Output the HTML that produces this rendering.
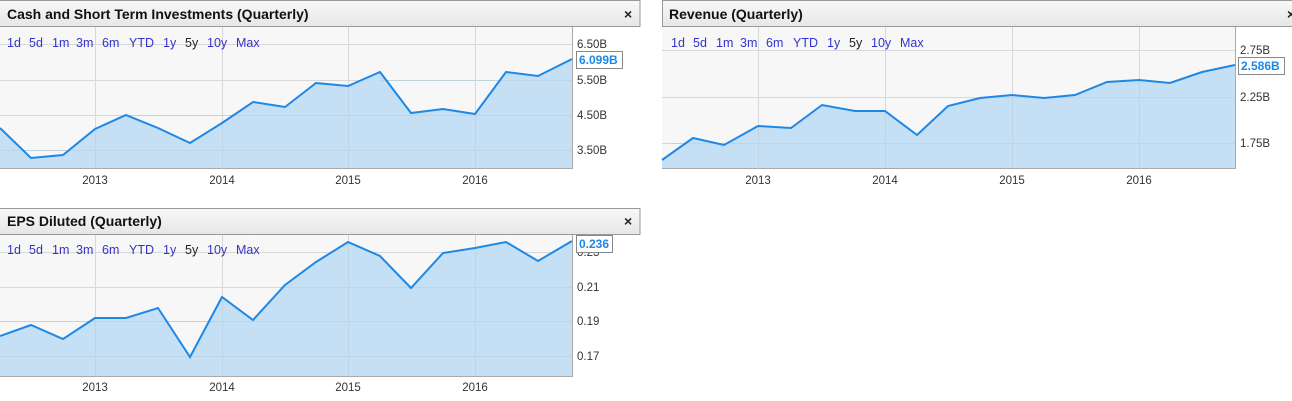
<!DOCTYPE html>
<html><head><meta charset="utf-8"><style>
html,body{margin:0;padding:0;background:#fff;width:1292px;height:401px;overflow:hidden}
svg{display:block;font-family:"Liberation Sans",Arial,sans-serif}
.t{font-weight:bold;font-size:14px;fill:#111}
.x{font-weight:bold;font-size:14px;fill:#222}
.r{font-size:12.5px;fill:#3333cc}
.ax{font-size:11.5px;fill:#333}
.grid{stroke:#d8d8d8;stroke-width:1}
.ln{fill:none;stroke:#1e88e5;stroke-width:2}
.ar{fill:#c5dff4}
.lb{font-size:12px;font-weight:bold;fill:#1e88e5}
</style></head><body>
<svg width="1292" height="401" viewBox="0 0 1292 401">
<defs><linearGradient id="hg" x1="0" y1="0" x2="0" y2="1"><stop offset="0" stop-color="#f9f9f9"/><stop offset="1" stop-color="#e6e6e6"/></linearGradient>
<g id="rng"><text class="r" y="0"><tspan x="7">1d</tspan><tspan x="29">5d</tspan><tspan x="52">1m</tspan><tspan x="76">3m</tspan><tspan x="102">6m</tspan><tspan x="129">YTD</tspan><tspan x="163">1y</tspan><tspan x="185" fill="#222">5y</tspan><tspan x="207">10y</tspan><tspan x="236">Max</tspan></text></g></defs>

<!-- Panel 1 -->
<rect x="-1" y="0.5" width="641" height="26" fill="url(#hg)" stroke="#999"/>
<text class="t" x="7" y="19">Cash and Short Term Investments (Quarterly)</text>
<text class="x" x="624" y="19">×</text>
<rect x="0" y="27" width="572" height="141" fill="#f7f7f7"/>
<g class="grid"><line x1="95.5" y1="27" x2="95.5" y2="168"/><line x1="222.5" y1="27" x2="222.5" y2="168"/><line x1="348.5" y1="27" x2="348.5" y2="168"/><line x1="475.5" y1="27" x2="475.5" y2="168"/>
<line x1="0" y1="44.5" x2="572" y2="44.5"/><line x1="0" y1="80.5" x2="572" y2="80.5"/><line x1="0" y1="115.5" x2="572" y2="115.5"/><line x1="0" y1="150.5" x2="572" y2="150.5"/></g>
<polygon class="ar" points="0,128 31,158 63,155 95,129 126,115 158,128 190,143 222,123 253,102 285,107 316,83 348,86 380,72 411,113 443,109 475,114 506,72 538,76 572,59 572,168 0,168"/>
<g stroke="#b8cfe0" opacity=".6"><line x1="95.5" y1="130" x2="95.5" y2="168"/><line x1="222.5" y1="123" x2="222.5" y2="168"/><line x1="348.5" y1="86" x2="348.5" y2="168"/><line x1="475.5" y1="114" x2="475.5" y2="168"/><line x1="0" y1="150.5" x2="572" y2="150.5"/><line x1="126" y1="115.5" x2="572" y2="115.5"/><line x1="380" y1="80.5" x2="572" y2="80.5"/></g>
<polyline class="ln" points="0,128 31,158 63,155 95,129 126,115 158,128 190,143 222,123 253,102 285,107 316,83 348,86 380,72 411,113 443,109 475,114 506,72 538,76 572,59"/>
<line x1="572.5" y1="27" x2="572.5" y2="168" stroke="#aaa"/><line x1="0" y1="168.5" x2="573" y2="168.5" stroke="#aaa"/>
<use href="#rng" y="47"/>
<text class="ax" x="577" y="48">6.50B</text><text class="ax" x="577" y="84">5.50B</text><text class="ax" x="577" y="119">4.50B</text><text class="ax" x="577" y="154">3.50B</text>
<rect x="576.5" y="51.5" width="46" height="17" fill="#fff" stroke="#888"/><text class="lb" x="579" y="64">6.099B</text>
<g class="ax" text-anchor="middle"><text x="95" y="184">2013</text><text x="222" y="184">2014</text><text x="348" y="184">2015</text><text x="475" y="184">2016</text></g>

<!-- Panel 2 -->
<rect x="662.5" y="0.5" width="640" height="26" fill="url(#hg)" stroke="#999"/>
<text class="t" x="669" y="19">Revenue (Quarterly)</text>
<text class="x" x="1287" y="19">×</text>
<rect x="662" y="27" width="573" height="141" fill="#f7f7f7"/>
<g class="grid"><line x1="758.5" y1="27" x2="758.5" y2="168"/><line x1="885.5" y1="27" x2="885.5" y2="168"/><line x1="1012.5" y1="27" x2="1012.5" y2="168"/><line x1="1139.5" y1="27" x2="1139.5" y2="168"/>
<line x1="662" y1="50.5" x2="1235" y2="50.5"/><line x1="662" y1="97.5" x2="1235" y2="97.5"/><line x1="662" y1="143.5" x2="1235" y2="143.5"/></g>
<polygon class="ar" points="662,160 693,138 724,145 758,126 791,128 822,105 855,111 885,111 917,135 948,106 980,98 1012,95 1044,98 1075,95 1107,82 1139,80 1170,83 1202,72 1235,65 1235,168 662,168"/>
<g stroke="#b8cfe0" opacity=".6"><line x1="758.5" y1="127" x2="758.5" y2="168"/><line x1="885.5" y1="111" x2="885.5" y2="168"/><line x1="1012.5" y1="95" x2="1012.5" y2="168"/><line x1="1139.5" y1="80" x2="1139.5" y2="168"/><line x1="670" y1="143.5" x2="1235" y2="143.5"/><line x1="980" y1="97.5" x2="1235" y2="97.5"/></g>
<polyline class="ln" points="662,160 693,138 724,145 758,126 791,128 822,105 855,111 885,111 917,135 948,106 980,98 1012,95 1044,98 1075,95 1107,82 1139,80 1170,83 1202,72 1235,65"/>
<line x1="1235.5" y1="27" x2="1235.5" y2="168" stroke="#aaa"/><line x1="662" y1="168.5" x2="1236" y2="168.5" stroke="#aaa"/>
<use href="#rng" x="664" y="47"/>
<text class="ax" x="1240" y="54">2.75B</text><text class="ax" x="1240" y="101">2.25B</text><text class="ax" x="1240" y="147">1.75B</text>
<rect x="1238.5" y="57.5" width="46" height="17" fill="#fff" stroke="#888"/><text class="lb" x="1241" y="70">2.586B</text>
<g class="ax" text-anchor="middle"><text x="758" y="184">2013</text><text x="885" y="184">2014</text><text x="1012" y="184">2015</text><text x="1139" y="184">2016</text></g>

<!-- Panel 3 -->
<rect x="-1" y="208.5" width="641" height="26" fill="url(#hg)" stroke="#999"/>
<text class="t" x="7" y="226">EPS Diluted (Quarterly)</text>
<text class="x" x="624" y="226">×</text>
<rect x="0" y="235" width="572" height="141" fill="#f7f7f7"/>
<g class="grid"><line x1="95.5" y1="235" x2="95.5" y2="376"/><line x1="222.5" y1="235" x2="222.5" y2="376"/><line x1="348.5" y1="235" x2="348.5" y2="376"/><line x1="475.5" y1="235" x2="475.5" y2="376"/>
<line x1="0" y1="252.5" x2="572" y2="252.5"/><line x1="0" y1="287.5" x2="572" y2="287.5"/><line x1="0" y1="321.5" x2="572" y2="321.5"/><line x1="0" y1="356.5" x2="572" y2="356.5"/></g>
<polygon class="ar" points="0,336 31,325 63,339 95,318 126,318 158,308 190,357 222,297 253,320 285,285 316,262 348,242 380,256 411,288 443,253 475,248 506,242 538,261 572,241 572,376 0,376"/>
<g stroke="#b8cfe0" opacity=".6"><line x1="95.5" y1="318" x2="95.5" y2="376"/><line x1="222.5" y1="297" x2="222.5" y2="376"/><line x1="348.5" y1="242" x2="348.5" y2="376"/><line x1="475.5" y1="248" x2="475.5" y2="376"/><line x1="0" y1="356.5" x2="572" y2="356.5"/><line x1="0" y1="321.5" x2="572" y2="321.5"/><line x1="280" y1="287.5" x2="572" y2="287.5"/></g>
<polyline class="ln" points="0,336 31,325 63,339 95,318 126,318 158,308 190,357 222,297 253,320 285,285 316,262 348,242 380,256 411,288 443,253 475,248 506,242 538,261 572,241"/>
<line x1="572.5" y1="235" x2="572.5" y2="376" stroke="#aaa"/><line x1="0" y1="376.5" x2="573" y2="376.5" stroke="#aaa"/>
<use href="#rng" y="254"/>
<text class="ax" x="577" y="256">0.23</text><text class="ax" x="577" y="291">0.21</text><text class="ax" x="577" y="325">0.19</text><text class="ax" x="577" y="360">0.17</text>
<rect x="576.5" y="235.5" width="36" height="17" fill="#fff" stroke="#888"/><text class="lb" x="579" y="248">0.236</text>
<g class="ax" text-anchor="middle"><text x="95" y="391">2013</text><text x="222" y="391">2014</text><text x="348" y="391">2015</text><text x="475" y="391">2016</text></g>
</svg>
</body></html>
